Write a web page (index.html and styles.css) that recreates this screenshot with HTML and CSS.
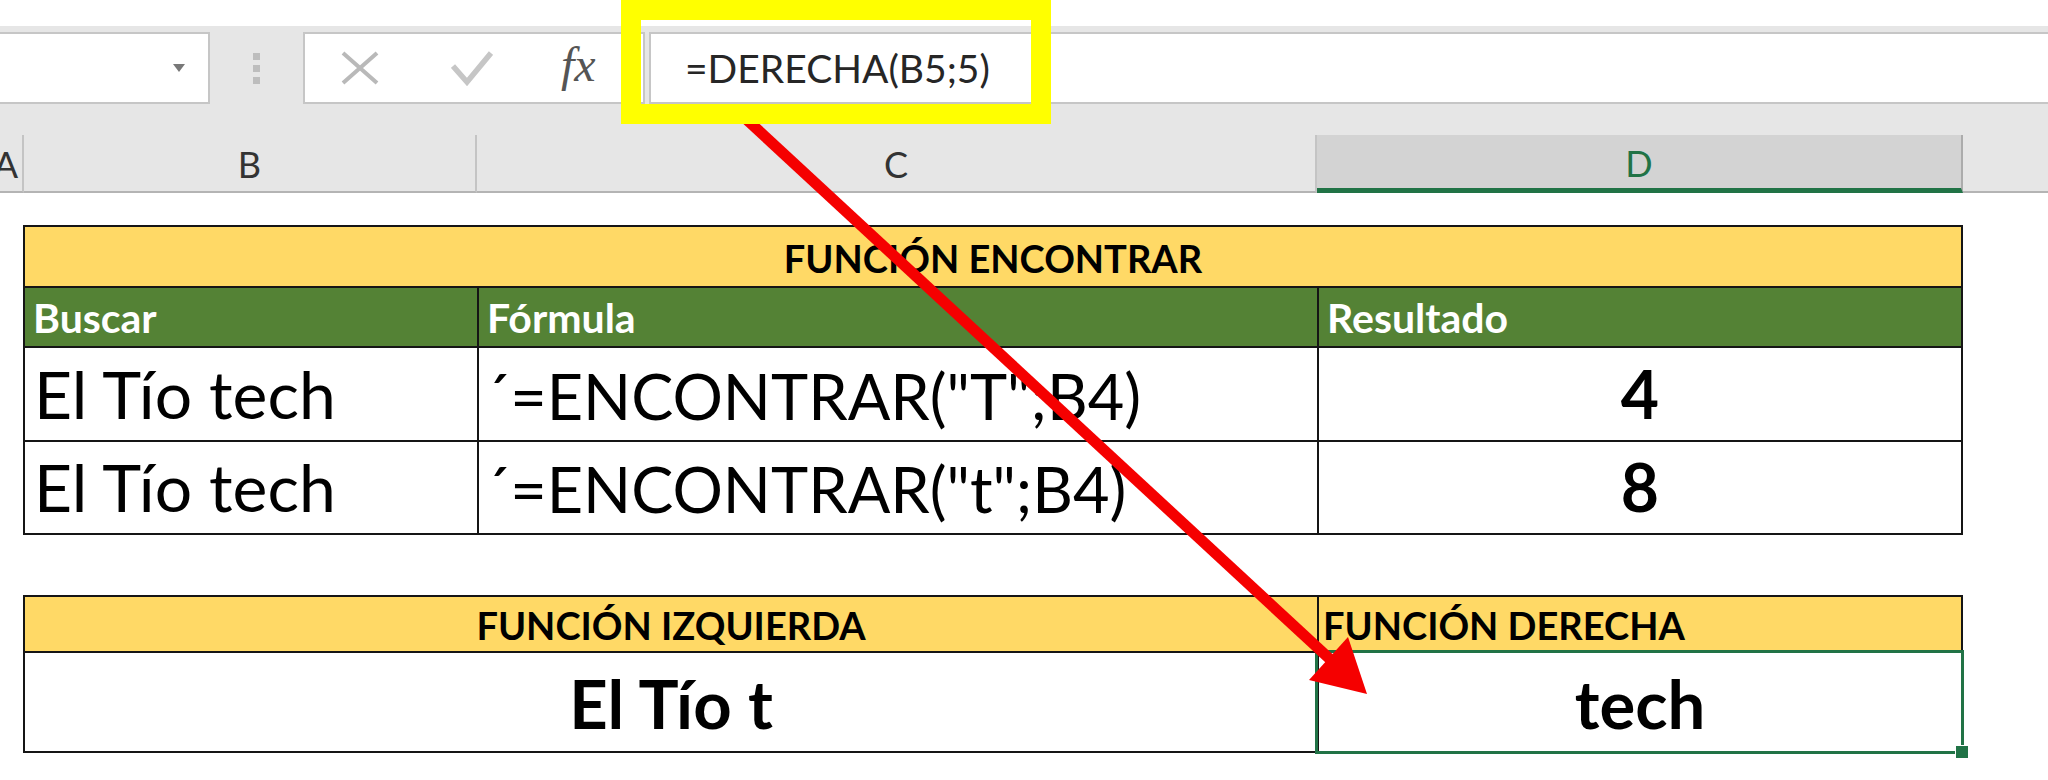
FILE: index.html
```html
<!DOCTYPE html>
<html lang="es">
<head>
<meta charset="utf-8">
<title>Función DERECHA</title>
<link rel="stylesheet" href="styles.css">
</head>
<body>
<div class="app">
  <div class="topstrip"></div>
  <div class="fbar">
    <div class="namebox"><span class="caret"></span></div>
    <div class="grip"><i></i><i></i><i></i></div>
    <div class="ctrls">
      <svg class="ic-x" width="38" height="34" viewBox="0 0 38 34"><path d="M2 2 L36 32 M36 2 L2 32" stroke="#b9b9b9" stroke-width="4" fill="none"/></svg>
      <svg class="ic-check" width="42" height="36" viewBox="0 0 42 36"><path d="M2 16 L16 32 L40 3" stroke="#c6c6c6" stroke-width="5.5" fill="none" stroke-linejoin="miter"/></svg>
      <span class="fx">fx</span>
    </div>
    <div class="finput">=DERECHA(B5;5)</div>
  </div>
  <div class="colheads">
    <div class="ch cha"><span>A</span></div>
    <div class="ch chb">B</div>
    <div class="ch chc">C</div>
    <div class="ch chd">D</div>
    <div class="ch che"></div>
  </div>
  <div class="sheet">
    <div class="tbl t1">
      <div class="c title span3">FUNCIÓN ENCONTRAR</div>
      <div class="c head">Buscar</div>
      <div class="c head">Fórmula</div>
      <div class="c head">Resultado</div>
      <div class="c data">El Tío tech</div>
      <div class="c data formula">´=ENCONTRAR("T";B4)</div>
      <div class="c data res">4</div>
      <div class="c data">El Tío tech</div>
      <div class="c data formula">´=ENCONTRAR("t";B4)</div>
      <div class="c data res">8</div>
    </div>
    <div class="tbl t2">
      <div class="c title">FUNCIÓN IZQUIERDA</div>
      <div class="c title left">FUNCIÓN DERECHA</div>
      <div class="c data res big">El Tío t</div>
      <div class="c data res big selected">tech</div>
    </div>
  </div>
  <svg class="arrow" width="2048" height="780" viewBox="0 0 2048 780">
    <line x1="745" y1="118" x2="1332" y2="661" stroke="#f50000" stroke-width="11"/>
    <polygon points="1367,694 1309,680 1348,637" fill="#f50000"/>
  </svg>
  <div class="callout"></div>
</div>
</body>
</html>
```
FILE: styles.css
```css
* { box-sizing: border-box; margin: 0; padding: 0; }
html, body { width: 2048px; height: 780px; overflow: hidden; background: #fff; }
body { font-family: Lato, "Open Sans", sans-serif; color: #000; }

.app { position: relative; width: 2048px; height: 780px; overflow: hidden; }

.topstrip { height: 26px; background: #fff; }

.fbar {
  height: 109px;
  background: #e6e6e6;
  padding-top: 6px;
  display: flex;
  align-items: flex-start;
}
.namebox {
  width: 212px;
  margin-left: -2px;
  height: 72px;
  background: #fff;
  border: 2px solid #c6c6c6;
  display: flex;
  align-items: center;
  justify-content: flex-end;
  padding-right: 23px;
}
.caret {
  width: 0; height: 0;
  border-left: 6px solid transparent;
  border-right: 6px solid transparent;
  border-top: 8px solid #787878;
}
.grip {
  width: 93px;
  height: 72px;
  display: flex;
  flex-direction: column;
  align-items: center;
  justify-content: center;
  gap: 5px;
}
.grip i { display: block; width: 7px; height: 7px; background: #bdbdbd; }

.ctrls {
  width: 342px;
  height: 72px;
  background: #fff;
  border: 2px solid #c6c6c6;
  display: flex;
  align-items: center;
}
.ic-x { margin-left: 36px; }
.ic-check { margin-left: 72px; }
.fx {
  margin-left: 68px;
  font-family: "Liberation Serif", "DejaVu Serif", serif;
  font-style: italic;
  font-size: 48px;
  color: #555;
  line-height: 1;
  margin-top: -6px;
}
.finput {
  flex: 1;
  margin-left: 4px;
  margin-right: -4px;
  height: 72px;
  background: #fff;
  border: 2px solid #c6c6c6;
  display: flex;
  align-items: center;
  padding-left: 34px;
  font-size: 39px;
  color: #262626;
  line-height: 1;
}

.colheads {
  height: 58px;
  display: flex;
  background: #e6e6e6;
}
.ch {
  height: 58px;
  border-right: 2px solid #c4c4c4;
  border-bottom: 2px solid #b4b4b4;
  display: flex;
  align-items: center;
  justify-content: center;
  font-size: 36px;
  color: #333;
  line-height: 1;
  padding-top: 2px;
}
.cha { width: 24px; overflow: hidden; justify-content: flex-end; }
.cha span { margin-right: 4px; }
.chb { width: 453px; }
.chc { width: 840px; }
.chd {
  width: 646px;
  background: #d3d3d3;
  color: #217346;
  border-bottom: 5px solid #217346;
  border-right-color: #acacac;
}
.che { flex: 1; border-right: none; }

.sheet { padding: 32px 0 0 23px; }

.tbl {
  display: grid;
  gap: 2px;
  padding: 2px;
  background: #151515;
  width: 1940px;
}
.t1 {
  grid-template-columns: 452px 838px 642px;
  grid-template-rows: 59px 58px 92px 91px;
}
.t2 {
  margin-top: 60px;
  grid-template-columns: 1292px 642px;
  grid-template-rows: 54px 98px;
}

.c {
  display: flex;
  align-items: flex-end;
  line-height: 1;
  background: #fff;
  white-space: nowrap;
}
.span3 { grid-column: 1 / 4; }

.title {
  background: #ffd966;
  font-weight: 700;
  font-size: 38px;
  justify-content: center;
  padding-bottom: 9px;
}
.t2 .title { padding-bottom: 7px; }
.title.left { justify-content: flex-start; padding-left: 4px; }

.head {
  background: #548235;
  color: #fff;
  font-weight: 700;
  font-size: 41px;
  padding: 0 0 8px 8px;
}

.data {
  font-size: 66px;
  padding: 0 0 13px 9px;
}
.formula { padding-left: 6px; font-size: 63px; }
.res {
  font-weight: 700;
  justify-content: center;
  padding-left: 0;
}
.big { font-size: 67px; padding-bottom: 14px; }

.selected { position: relative; }
.selected::before {
  content: "";
  position: absolute;
  left: -4px; top: -3px; right: -3px; bottom: -3px;
  border: 3px solid #217346;
}
.selected::after {
  content: "";
  position: absolute;
  right: -8px; bottom: -8px;
  width: 12px; height: 12px;
  background: #217346;
  border: 1px solid #fff;
}

.arrow { position: absolute; left: 0; top: 0; pointer-events: none; }

.callout {
  position: absolute;
  left: 621px;
  top: 0;
  width: 430px;
  height: 124px;
  border: 20px solid #ffff00;
}
```
